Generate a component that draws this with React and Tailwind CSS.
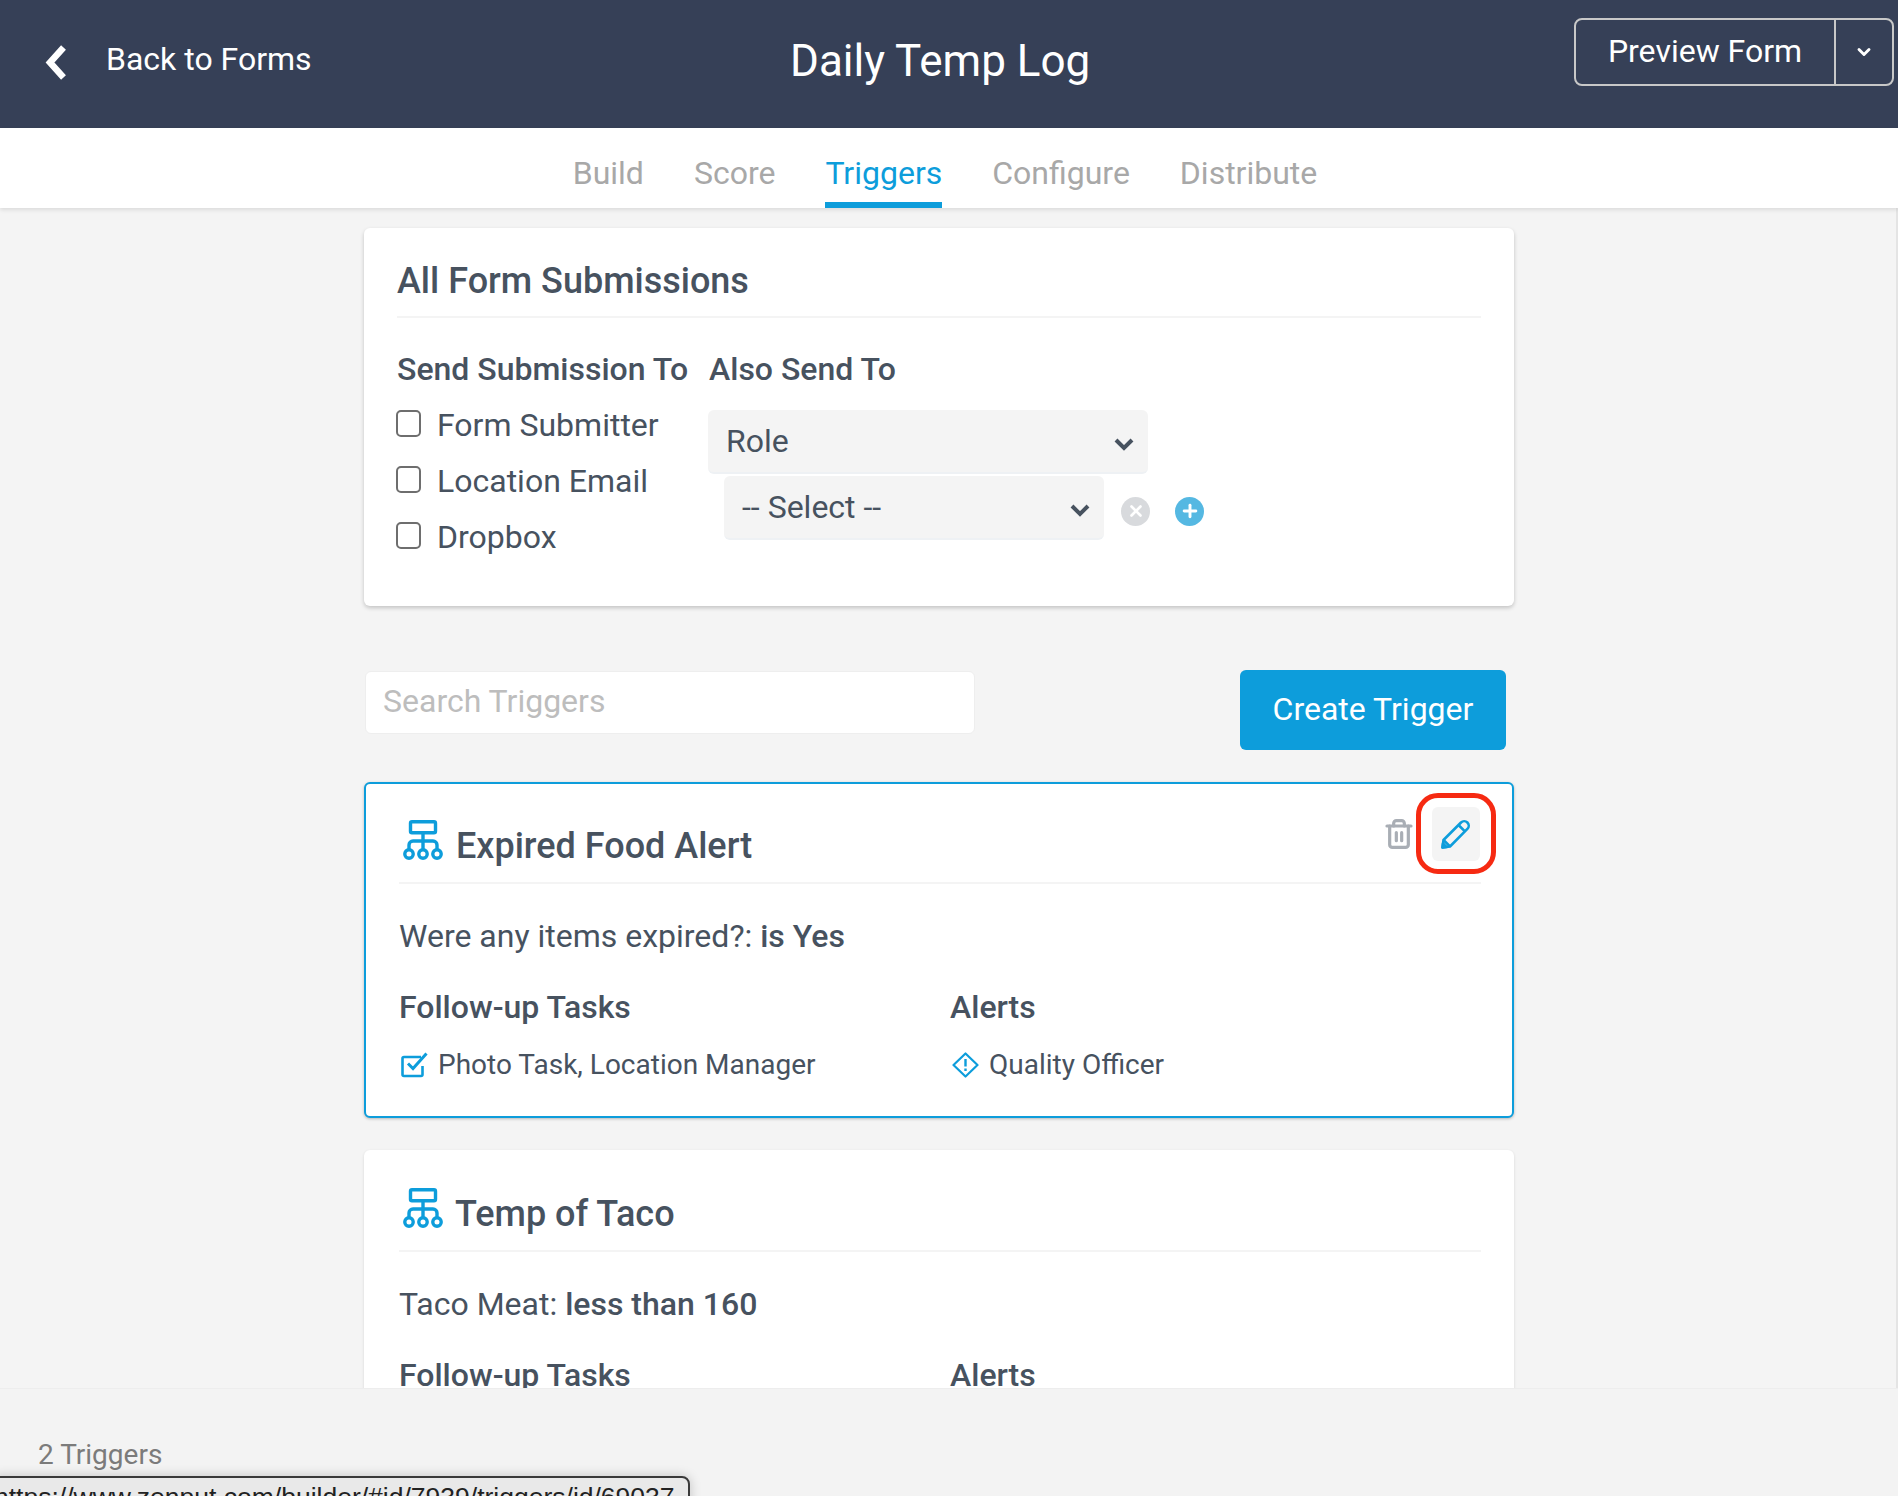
import { ChevronDown, Plus, Trash2, X } from 'lucide-react'

const tabs = ['Build', 'Score', 'Triggers', 'Configure', 'Distribute']

function TreeIcon() {
  return (
    <svg width="40" height="40" viewBox="0 0 40 40" fill="none" stroke="#0d9ddb" strokeWidth="3.4" className="shrink-0">
      <rect x="7.5" y="1.7" width="25" height="11" rx="1.5" />
      <path d="M20 13v16M6 29v-4a4 4 0 0 1 4-4h20a4 4 0 0 1 4 4v4" />
      <circle cx="6" cy="34" r="4.2" />
      <circle cx="20" cy="34" r="4.2" />
      <circle cx="34" cy="34" r="4.2" />
    </svg>
  )
}

function CheckSquareIcon() {
  return (
    <svg width="27" height="26" viewBox="0 0 27 26" fill="none" stroke="#0d9ddb" strokeWidth="2.6" className="shrink-0 ml-[2px]">
      <path d="M20 5H3a1.5 1.5 0 0 0-1.5 1.5v16A1.5 1.5 0 0 0 3 24h17a1.5 1.5 0 0 0 1.5-1.5V14" />
      <path d="M7 11.5l5 5L25.5 1.5" strokeWidth="3" />
    </svg>
  )
}

function AlertDiamondIcon() {
  return (
    <svg width="27" height="26" viewBox="0 0 27 26" fill="none" stroke="#0d9ddb" strokeWidth="2.2" className="shrink-0 ml-[2px]">
      <path d="M13.5 1.5L25.5 13 13.5 24.5 1.5 13z" strokeLinejoin="round" />
      <path d="M13.5 7v7.5M13.5 16.5v2.5" strokeWidth="2.4" />
    </svg>
  )
}

function PencilIcon() {
  return (
    <svg width="30" height="30" viewBox="0 0 30 30" fill="none" stroke="#0d9ddb" strokeWidth="2.6" strokeLinejoin="round">
      <path d="M9 27.5L1.5 28.5 2.5 21 20 3.5a4.5 4.5 0 0 1 6.4 6.4z" />
      <path d="M17.5 6l6.4 6.4M2.5 21l6.5 6.5" />
      <path d="M1.5 28.5L2 24.5l3.5 3.5z" fill="#0d9ddb" />
    </svg>
  )
}

function SelectBox({ label, className }) {
  return (
    <div className={`relative ${className}`}>
      <select className="w-full h-full appearance-none rounded-md bg-[#f4f4f4] border-b-2 border-[#eef1f4] pl-[18px] text-[32px] text-[#47525f] outline-none">
        <option>{label}</option>
      </select>
      <svg width="20" height="13" viewBox="0 0 20 13" fill="none" stroke="#47525f" strokeWidth="4" className="absolute right-[14px] top-[28px] pointer-events-none">
        <path d="M2 2l8 8 8-8" />
      </svg>
    </div>
  )
}

function CheckRow({ label }) {
  return (
    <label className="flex items-center h-[56px] text-[32px] text-[#47525f]">
      <input type="checkbox" className="appearance-none w-[25px] h-[27px] ml-[-1px] mr-[16px] mb-[4px] rounded-[5px] border-2 border-[#6e6e6e] bg-white" />
      {label}
    </label>
  )
}

function TriggerCard({ title, field, value, task, alert, active, titleGap, actions }) {
  return (
    <div className={`relative w-[1150px] h-[336px] ml-[364px] bg-white rounded-md px-[33px] border-2 ${active ? 'border-[#0d9ddb] shadow-[0_1px_3px_rgba(0,0,0,0.25)]' : 'border-white shadow-[0_1px_3px_rgba(0,0,0,0.12)]'}`}>
      <div className="h-[100px] flex items-start border-b-2 border-[#f4f4f4] -mr-[2px]">
        <span className="mt-[36px] ml-[4px] shrink-0">
          <TreeIcon />
        </span>
        <h2 className="text-[36px] leading-[44px] font-medium text-[#47525f] mt-[40px]" style={{ marginLeft: titleGap }}>{title}</h2>
      </div>
      <p className="mt-[32px] text-[32px] leading-[40px] text-[#47525f]">
        {field}: <span className="font-medium">{value}</span>
      </p>
      <div className="flex mt-[31px] text-[#47525f]">
        <div className="w-[551px]">
          <h3 className="text-[32px] leading-[40px] font-medium">Follow-up Tasks</h3>
          {task && (
            <div className="flex items-center gap-[10px] mt-[18px] text-[28px] leading-[40px]">
              <CheckSquareIcon />
              {task}
            </div>
          )}
        </div>
        <div>
          <h3 className="text-[32px] leading-[40px] font-medium">Alerts</h3>
          {alert && (
            <div className="flex items-center gap-[10px] mt-[18px] text-[28px] leading-[40px]">
              <AlertDiamondIcon />
              {alert}
            </div>
          )}
        </div>
      </div>
      {actions}
    </div>
  )
}

export default function App() {
  return (
    <div className="relative h-[1496px] flex flex-col overflow-hidden bg-[#f4f4f4]" style={{ fontFamily: 'Roboto, sans-serif' }}>
      <header className="h-[128px] shrink-0 flex bg-[#364057] text-white">
        <div className="w-[790px] flex items-center pb-[8px]">
          <svg width="21" height="35" viewBox="0 0 21 35" fill="none" stroke="white" strokeWidth="6.5" className="ml-[45px] mt-[4px]">
            <path d="M18.5 2.5L5 17.5l13.5 15" />
          </svg>
          <span className="ml-[40px] text-[32px] mt-[-2px]">Back to Forms</span>
        </div>
        <h1 className="text-[44px] leading-[122px]">Daily Temp Log</h1>
        <div className="ml-auto mr-[4px] mt-[18px] h-[68px] w-[320px] flex border-2 border-[#c8c8c8] rounded-lg">
          <button className="flex-1 text-[32px] pb-[2px]">Preview Form</button>
          <button className="w-[58px] border-l-2 border-[#c8c8c8] flex items-center justify-center">
            <ChevronDown size={20} strokeWidth={3.5} />
          </button>
        </div>
      </header>

      <nav className="h-[80px] shrink-0 bg-white flex justify-center gap-[50px] pr-[8px] text-[32px] text-[#a8a8a8] shadow-[0_2px_4px_rgba(0,0,0,0.1)] relative">
        {tabs.map(tab => (
          <span key={tab} className={`h-[80px] leading-[90px] ${tab === 'Triggers' ? 'text-[#0d9ddb] border-b-[6px] border-[#0d9ddb]' : ''}`}>{tab}</span>
        ))}
      </nav>

      <main className="flex-1 min-h-0 overflow-hidden pt-[20px] border-r-2 border-[#e4e4e4]">
        <section className="w-[1150px] h-[378px] ml-[364px] bg-white rounded-md px-[33px] shadow-[0_2px_4px_rgba(0,0,0,0.2)]">
          <h2 className="h-[90px] pt-[31px] text-[36px] leading-[44px] font-medium text-[#47525f] border-b-2 border-[#f4f4f4]">All Form Submissions</h2>
          <div className="flex mt-[29px]">
            <div className="w-[312px]">
              <h3 className="text-[32px] leading-[44px] font-medium text-[#47525f]">Send Submission To</h3>
              <div className="mt-[6px]">
                <CheckRow label="Form Submitter" />
                <CheckRow label="Location Email" />
                <CheckRow label="Dropbox" />
              </div>
            </div>
            <div>
              <h3 className="text-[32px] leading-[44px] font-medium text-[#47525f]">Also Send To</h3>
              <SelectBox label="Role" className="w-[440px] h-[64px] mt-[19px] ml-[-1px]" />
              <div className="flex items-center">
                <SelectBox label="-- Select --" className="w-[380px] h-[64px] ml-[15px] mt-[2px]" />
                <span className="ml-[17px] mt-[8px] w-[29px] h-[29px] rounded-full bg-[#d8dadd] text-white flex items-center justify-center">
                  <X size={18} strokeWidth={3.5} />
                </span>
                <span className="ml-[25px] mt-[8px] w-[29px] h-[29px] rounded-full bg-[#55b8e2] text-white flex items-center justify-center">
                  <Plus size={20} strokeWidth={3.5} />
                </span>
              </div>
            </div>
          </div>
        </section>

        <div className="flex w-[1150px] ml-[364px] mt-[64px] mb-[32px] items-start">
          <input placeholder="Search Triggers" className="w-[610px] h-[63px] mt-[1px] ml-[1px] pl-[17px] pb-[3px] rounded-md bg-white border border-[#eeeeee] text-[32px] placeholder:text-[#bdbdbd] outline-none" />
          <button className="ml-auto mr-[8px] w-[266px] h-[80px] pb-[2px] rounded-md bg-[#0d9ddb] text-white text-[32px]">Create Trigger</button>
        </div>

        <TriggerCard
          active
          title="Expired Food Alert"
          field="Were any items expired?"
          value="is Yes"
          task="Photo Task, Location Manager"
          alert="Quality Officer"
          titleGap="13px"
          actions={
            <>
              <Trash2 className="absolute right-[97px] top-[34px] text-[#a9aeb5]" size={32} strokeWidth={2.4} />
              <span className="absolute right-[32px] top-[23px] w-[48px] h-[54px] rounded-md bg-[#f4f4f4] flex items-center justify-center">
                <PencilIcon />
              </span>
              <span className="absolute right-[16px] top-[9px] w-[80px] h-[81px] rounded-[22px] border-[5px] border-[#f62a12]" />
            </>
          }
        />

        <div className="mt-[32px]">
          <TriggerCard title="Temp of Taco" field="Taco Meat" value="less than 160" titleGap="12px" />
        </div>
      </main>

      <footer className="h-[108px] shrink-0 bg-[#f3f3f3] border-t border-[#ededed] pl-[38px] pt-[45px] text-[28px] text-[#7b7b7b] relative">
        2 Triggers
      </footer>

      <div className="absolute left-[-8px] top-[1476px] w-[698px] h-[40px] rounded-lg border-2 border-[#3a3a3a] bg-[#e9e9e9] pl-[0px] pt-[4px] text-[26.5px] leading-[30px] text-[#222] whitespace-nowrap overflow-hidden shadow-[0_0_12px_rgba(0,0,0,0.2)]" style={{ fontFamily: '"Liberation Sans", sans-serif' }}>
        https://www.zenput.com/builder/#id/7939/triggers/id/69037
      </div>
    </div>
  )
}
